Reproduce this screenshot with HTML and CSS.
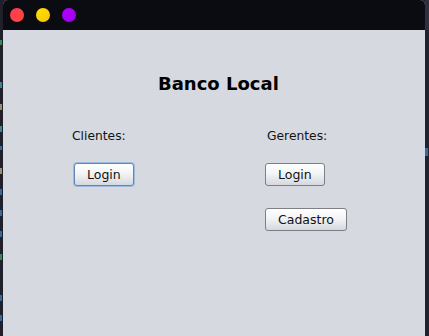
FILE: index.html
```html
<!DOCTYPE html>
<html lang="pt">
<head>
<meta charset="utf-8">
<title>Banco Local</title>
<link rel="stylesheet" href="styles.css">
</head>
<body>
<div class="desk">
  <div class="edge-left">
    <span class="mk g m1"></span>
    <span class="mk c m2"></span>
    <span class="mk y m3"></span>
    <span class="mk c m4"></span>
    <span class="mk b m5"></span>
    <span class="mk y m6"></span>
    <span class="mk b m7"></span>
    <span class="mk b m8"></span>
    <span class="mk b m9"></span>
    <span class="mk g m10"></span>
    <span class="mk b m11"></span>
    <span class="mk b m12"></span>
  </div>
  <div class="window">
    <div class="titlebar">
      <span class="dot red"></span>
      <span class="dot yellow"></span>
      <span class="dot purple"></span>
    </div>
    <div class="content">
      <h1 class="title">Banco Local</h1>
      <div class="columns">
        <div class="col col-clients">
          <div class="label">Clientes:</div>
          <button class="btn focused">Login</button>
        </div>
        <div class="col col-managers">
          <div class="label">Gerentes:</div>
          <button class="btn">Login</button>
          <button class="btn">Cadastro</button>
        </div>
      </div>
    </div>
  </div>
  <div class="edge-right">
    <div class="edge-right-top"></div>
    <span class="mk b rmk"></span>
  </div>
</div>
</body>
</html>
```

FILE: styles.css
```css
html, body {
  margin: 0;
  padding: 0;
  background: #1f2029;
  width: 429px;
  height: 336px;
  overflow: hidden;
}

.desk {
  display: flex;
  width: 429px;
  height: 336px;
}

.edge-left {
  width: 3px;
  flex: none;
  display: flex;
  flex-direction: column;
  background: #1f2029;
}

.mk {
  display: block;
  width: 2px;
  height: 6px;
  flex: none;
  opacity: 0.75;
}
.mk.g { background: #3fae6a; }
.mk.c { background: #4aa7b8; }
.mk.y { background: #c9b184; }
.mk.b { background: #3b86c9; }
.m1 { margin-top: 40px; height: 5px; }
.m2 { margin-top: 37px; }
.m3 { margin-top: 16px; }
.m4 { margin-top: 16px; }
.m5 { margin-top: 14px; height: 4px; }
.m6 { margin-top: 18px; }
.m7 { margin-top: 15px; }
.m8 { margin-top: 15px; }
.m9 { margin-top: 15px; }
.m10 { margin-top: 17px; }
.m11 { margin-top: 35px; }
.m12 { margin-top: 14px; }

.window {
  width: 422px;
  flex: none;
  display: flex;
  flex-direction: column;
  background: #d6d9e0;
  border-radius: 5px 5px 0 0;
  overflow: hidden;
}

.titlebar {
  height: 30px;
  flex: none;
  background: #0b0c11;
  display: flex;
  align-items: center;
  gap: 12px;
  padding-left: 7px;
}

.dot {
  width: 14px;
  height: 14px;
  border-radius: 50%;
  display: block;
}
.dot.red { background: linear-gradient(135deg, #ff3a5c, #ff4a32); }
.dot.yellow { background: linear-gradient(135deg, #ffe100, #f9c406); }
.dot.purple { background: linear-gradient(135deg, #b400ff, #9a00e6); }

.content {
  flex: 1;
  padding-top: 43px;
  font-family: "DejaVu Sans", sans-serif;
  color: #111;
}

.title {
  margin: 0;
  padding-left: 155px;
  font-size: 18px;
  line-height: 22px;
  font-weight: bold;
  color: #000;
}

.columns {
  display: flex;
  padding-left: 69px;
  margin-top: 34px;
}

.col {
  display: flex;
  flex-direction: column;
  align-items: flex-start;
}

.col-clients {
  width: 195px;
}

.label {
  font-size: 12.3px;
  line-height: 15px;
  margin-bottom: 19px;
  color: #141414;
}

.btn {
  font-family: "DejaVu Sans", sans-serif;
  font-size: 12.5px;
  line-height: 21px;
  height: 23px;
  padding: 0 12px;
  margin: 0;
  border: 1px solid #7c7f86;
  border-radius: 3px;
  background: linear-gradient(#ffffff, #f3f4f6 45%, #d5d8de);
  color: #111;
  box-sizing: border-box;
}

.col-clients .btn {
  margin-left: 2px;
}

.col-managers .btn {
  margin-left: -2px;
}

.col-managers .btn + .btn {
  margin-top: 22px;
}

.btn.focused {
  border-color: #5f86b5;
  box-shadow: 0 0 0 1px #9dbbe0;
}

.edge-right {
  width: 4px;
  flex: none;
  background: #21222d;
  display: flex;
  flex-direction: column;
}

.edge-right-top {
  height: 30px;
  background: #2e303d;
}

.rmk {
  width: 3px;
  margin-top: 118px;
  margin-left: 0;
  height: 8px;
}
```
